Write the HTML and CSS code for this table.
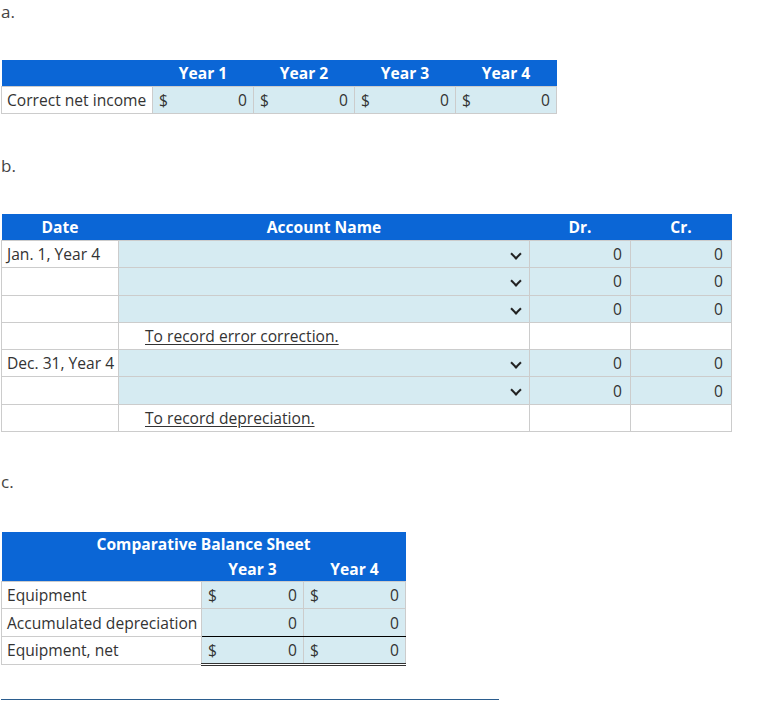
FILE: index.html
```html
<!DOCTYPE html>
<html>
<head>
<meta charset="utf-8">
<link rel="stylesheet" href="styles.css">
</head>
<body>
<div class="page">
  <div class="part">a.</div>
  <table class="grid ta">
    <colgroup><col class="c-label"><col class="c-yr"><col class="c-yr"><col class="c-yr"><col class="c-yr"></colgroup>
    <tr class="head"><th></th><th>Year 1</th><th>Year 2</th><th>Year 3</th><th>Year 4</th></tr>
    <tr>
      <td class="lbl">Correct net income</td>
      <td class="inp"><span class="cur">$</span><span class="val">0</span></td>
      <td class="inp"><span class="cur">$</span><span class="val">0</span></td>
      <td class="inp"><span class="cur">$</span><span class="val">0</span></td>
      <td class="inp"><span class="cur">$</span><span class="val">0</span></td>
    </tr>
  </table>

  <div class="part pb">b.</div>
  <table class="grid tb">
    <colgroup><col class="c-date"><col class="c-acct"><col class="c-amt"><col class="c-amt"></colgroup>
    <tr class="head"><th>Date</th><th>Account Name</th><th>Dr.</th><th>Cr.</th></tr>
    <tr><td class="lbl">Jan. 1, Year 4</td><td class="inp sel"><span class="chev"></span></td><td class="inp num">0</td><td class="inp num">0</td></tr>
    <tr><td class="lbl"></td><td class="inp sel"><span class="chev"></span></td><td class="inp num">0</td><td class="inp num">0</td></tr>
    <tr><td class="lbl"></td><td class="inp sel"><span class="chev"></span></td><td class="inp num">0</td><td class="inp num">0</td></tr>
    <tr><td class="lbl"></td><td class="note"><span>To record error correction.</span></td><td></td><td></td></tr>
    <tr><td class="lbl">Dec. 31, Year 4</td><td class="inp sel"><span class="chev"></span></td><td class="inp num">0</td><td class="inp num">0</td></tr>
    <tr><td class="lbl"></td><td class="inp sel"><span class="chev"></span></td><td class="inp num">0</td><td class="inp num">0</td></tr>
    <tr><td class="lbl"></td><td class="note"><span>To record depreciation.</span></td><td></td><td></td></tr>
  </table>

  <div class="part pc">c.</div>
  <table class="grid tc">
    <colgroup><col class="c-blabel"><col class="c-byr"><col class="c-byr"></colgroup>
    <tr class="head title"><th colspan="3">Comparative Balance Sheet</th></tr>
    <tr class="head sub"><th></th><th>Year 3</th><th>Year 4</th></tr>
    <tr>
      <td class="lbl">Equipment</td>
      <td class="inp"><span class="cur">$</span><span class="val">0</span></td>
      <td class="inp"><span class="cur">$</span><span class="val">0</span></td>
    </tr>
    <tr class="single">
      <td class="lbl">Accumulated depreciation</td>
      <td class="inp"><span class="cur"></span><span class="val">0</span></td>
      <td class="inp"><span class="cur"></span><span class="val">0</span></td>
    </tr>
    <tr class="double">
      <td class="lbl">Equipment, net</td>
      <td class="inp"><span class="cur">$</span><span class="val">0</span></td>
      <td class="inp"><span class="cur">$</span><span class="val">0</span></td>
    </tr>
  </table>
  <div class="rule"></div>
</div>
</body>
</html>
```

FILE: styles.css
```css
html, body {
  margin: 0;
  padding: 0;
  background: #ffffff;
}
.page {
  padding: 0 1px;
  font-family: "Open Sans", "Liberation Sans", sans-serif;
  font-size: 15.6px;
  color: #333333;
}
.part {
  height: 24px;
  line-height: 24px;
  font-size: 17px;
  color: #444444;
}
.pb { margin-top: 40px; }
.pc { margin-top: 38px; }

.grid {
  border-collapse: collapse;
  table-layout: fixed;
}
.grid td, .grid th {
  padding: 0 6px;
  white-space: nowrap;
  overflow: hidden;
}
.grid th {
  background: #0b66d6;
  color: #ffffff;
  font-weight: 700;
  text-align: center;
  height: 26px;
  border: 0;
  font-size: 15.6px;
}
.grid td {
  border: 1px solid #cccccc;
  height: 26px;
  line-height: 20px;
}
.grid td.lbl {
  background: #ffffff;
  padding-left: 5px;
}
.grid td.inp {
  background: #d6ebf2;
}
.inp .cur {
  float: left;
}
.inp .val {
  float: right;
}

.ta { margin-top: 36px; width: 555px; }
.c-label { width: 151px; }
.c-yr { width: 101px; }

.tb { margin-top: 36px; width: 731px; }
.c-date { width: 117px; }
.c-acct { width: 411px; }
.c-amt { width: 101px; }
.tb td { height: 26.3px; }
.tb td.num { text-align: right; padding-right: 8px; }
.tb td.sel { position: relative; }
.chev {
  position: absolute;
  right: 9px;
  top: 9px;
  width: 6px;
  height: 6px;
  border-right: 2px solid #222222;
  border-bottom: 2px solid #222222;
  transform: rotate(45deg);
}
.tb td.note {
  padding-left: 26px;
}
.tb td.note span {
  text-decoration: underline;
  text-underline-offset: 2px;
}

.tc { margin-top: 38px; width: 404px; }
.c-blabel { width: 200px; }
.c-byr { width: 102px; }
.tc .title th { height: 24px; text-align: center; padding-bottom: 0; }
.tc .sub th { height: 25px; }
.tc td { height: 26.3px; }
.tc .single td.inp { border-bottom: 1px solid #000000; }
.tc .double td.inp { border-bottom: 3px double #333333; }

.rule {
  margin-top: 33px;
  width: 498px;
  height: 0;
  border-top: 1px solid #2b5d8e;
}
```
